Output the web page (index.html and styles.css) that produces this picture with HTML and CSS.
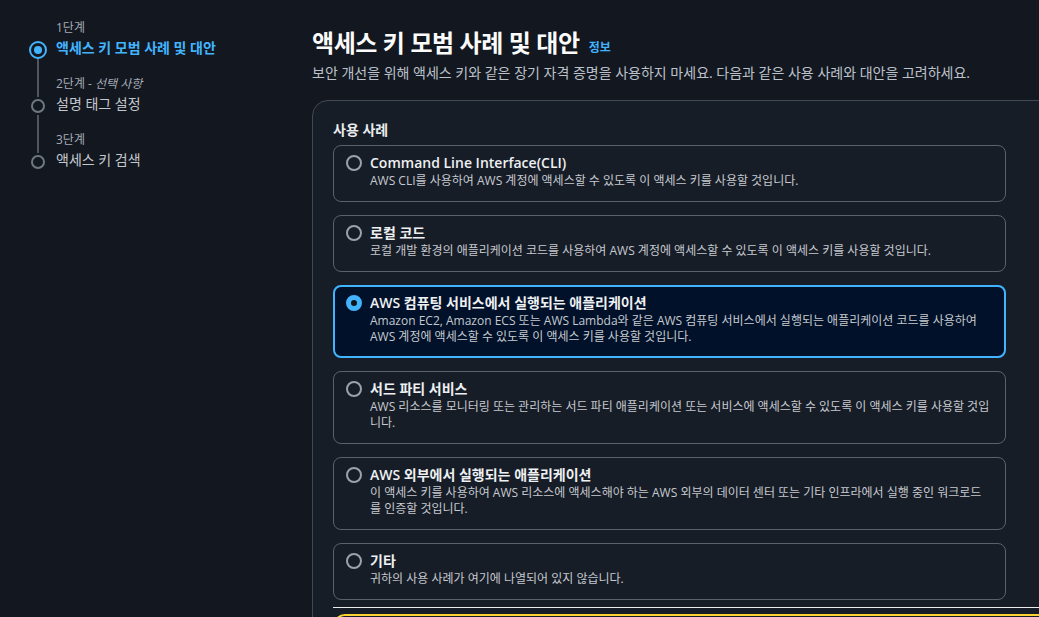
FILE: index.html
```html
<!DOCTYPE html>
<html lang="ko">
<head>
    <meta charset="UTF-8">
    <title>액세스 키 생성</title>
    <link rel="stylesheet" href="styles.css">
</head>
<body>
    <div class="layout">
        <nav class="steps">
            <ol class="step-list">
                <li class="step active">
                    <div class="rail"><span class="rail-top"></span><span class="dot"></span><span class="rail-bottom"></span></div>
                    <div class="step-text">
                        <div class="step-num">1단계</div>
                        <div class="step-name">액세스 키 모범 사례 및 대안</div>
                    </div>
                </li>
                <li class="step">
                    <div class="rail"><span class="rail-top"></span><span class="dot"></span><span class="rail-bottom"></span></div>
                    <div class="step-text">
                        <div class="step-num">2단계 - <em>선택 사항</em></div>
                        <div class="step-name">설명 태그 설정</div>
                    </div>
                </li>
                <li class="step last">
                    <div class="rail"><span class="rail-top"></span><span class="dot"></span><span class="rail-bottom"></span></div>
                    <div class="step-text">
                        <div class="step-num">3단계</div>
                        <div class="step-name">액세스 키 검색</div>
                    </div>
                </li>
            </ol>
        </nav>

        <main class="content">
            <div class="page-head">
                <h1>액세스 키 모범 사례 및 대안</h1>
                <a class="info" href="#">정보</a>
            </div>
            <p class="page-desc">보안 개선을 위해 액세스 키와 같은 장기 자격 증명을 사용하지 마세요. 다음과 같은 사용 사례와 대안을 고려하세요.</p>

            <section class="panel">
                <h2>사용 사례</h2>
                <div class="tiles">
                    <label class="tile">
                        <input type="radio" name="usecase" class="radio">
                        <span class="tile-title">Command Line Interface(CLI)</span>
                        <span class="tile-desc">AWS CLI를 사용하여 AWS 계정에 액세스할 수 있도록 이 액세스 키를 사용할 것입니다.</span>
                    </label>
                    <label class="tile">
                        <input type="radio" name="usecase" class="radio">
                        <span class="tile-title">로컬 코드</span>
                        <span class="tile-desc">로컬 개발 환경의 애플리케이션 코드를 사용하여 AWS 계정에 액세스할 수 있도록 이 액세스 키를 사용할 것입니다.</span>
                    </label>
                    <label class="tile selected">
                        <input type="radio" name="usecase" class="radio" checked>
                        <span class="tile-title">AWS 컴퓨팅 서비스에서 실행되는 애플리케이션</span>
                        <span class="tile-desc">Amazon EC2, Amazon ECS 또는 AWS Lambda와 같은 AWS 컴퓨팅 서비스에서 실행되는 애플리케이션 코드를 사용하여 AWS 계정에 액세스할 수 있도록 이 액세스 키를 사용할 것입니다.</span>
                    </label>
                    <label class="tile">
                        <input type="radio" name="usecase" class="radio">
                        <span class="tile-title">서드 파티 서비스</span>
                        <span class="tile-desc">AWS 리소스를 모니터링 또는 관리하는 서드 파티 애플리케이션 또는 서비스에 액세스할 수 있도록 이 액세스 키를 사용할 것입니다.</span>
                    </label>
                    <label class="tile">
                        <input type="radio" name="usecase" class="radio">
                        <span class="tile-title">AWS 외부에서 실행되는 애플리케이션</span>
                        <span class="tile-desc">이 액세스 키를 사용하여 AWS 리소스에 액세스해야 하는 AWS 외부의 데이터 센터 또는 기타 인프라에서 실행 중인 워크로드를 인증할 것입니다.</span>
                    </label>
                    <label class="tile">
                        <input type="radio" name="usecase" class="radio">
                        <span class="tile-title">기타</span>
                        <span class="tile-desc">귀하의 사용 사례가 여기에 나열되어 있지 않습니다.</span>
                    </label>
                </div>
                <div class="divider"></div>
                <div class="alert"></div>
            </section>
        </main>
    </div>
</body>
</html>
```

FILE: styles.css
```css
html, body {
    height: 100%;
}

body {
    margin: 0;
    overflow: hidden;
    background: #13171f;
    color: #e9ebed;
    font-family: "Open Sans", "Noto Sans CJK KR", sans-serif;
}

.layout {
    display: grid;
    grid-template-columns: 312px 1fr;
    height: 100%;
}

/* steps */
.steps {
    padding: 19px 0 0 29px;
}

.step-list {
    list-style: none;
    margin: 0;
    padding: 0;
}

.step {
    display: grid;
    grid-template-columns: 18px 1fr;
    column-gap: 9px;
}

.rail {
    display: flex;
    flex-direction: column;
    align-items: center;
}

.rail-top {
    width: 2px;
    height: 22px;
    background: #4f5663;
}

.rail-bottom {
    width: 2px;
    flex: 1;
    background: #4f5663;
}

.step.active .rail-top,
.step.last .rail-bottom {
    visibility: hidden;
}

.dot {
    box-sizing: border-box;
    width: 14px;
    height: 14px;
    margin: 2px 0;
    border: 2px solid #6f7782;
    border-radius: 50%;
}

.step.active .dot {
    width: 18px;
    height: 18px;
    margin: 0;
    border-color: #42b4ff;
    display: grid;
    place-items: center;
}

.step.active .dot::after {
    content: "";
    width: 8px;
    height: 8px;
    border-radius: 50%;
    background: #42b4ff;
}

.step-text {
    padding-bottom: 16px;
}

.step.last .step-text {
    padding-bottom: 0;
}

.step-num {
    font-size: 12px;
    line-height: 18px;
    color: #a3abb6;
}

.step-num em {
    font-style: italic;
}

.step-name {
    font-size: 14px;
    line-height: 22px;
    color: #c3c8cf;
}

.step.active .step-name {
    color: #42b4ff;
    font-weight: 700;
}

/* main */
.content {
    padding-top: 27px;
    min-width: 0;
}

.page-head {
    display: flex;
    align-items: baseline;
    gap: 9px;
}

h1 {
    margin: 0;
    font-size: 24px;
    line-height: 32px;
    font-weight: 700;
    letter-spacing: -0.4px;
    color: #fbfbfb;
}

.info {
    font-size: 12px;
    font-weight: 700;
    color: #42b4ff;
    text-decoration: none;
}

.page-desc {
    margin: 4px 0 0;
    font-size: 14px;
    line-height: 20px;
    color: #bcc2cb;
}

.panel {
    margin-top: 17px;
    width: 760px;
    min-height: 600px;
    padding: 19px 20px 0;
    border: 1px solid #434853;
    border-radius: 16px 16px 0 0;
    background: #171d27;
}

h2 {
    margin: 0 0 5px;
    font-size: 14px;
    line-height: 20px;
    font-weight: 700;
    color: #e9ebed;
}

.tiles {
    width: 673px;
    display: flex;
    flex-direction: column;
    gap: 13px;
}

.tile {
    display: grid;
    grid-template-columns: 16px 1fr;
    column-gap: 8px;
    padding: 7px 14px 12px 12px;
    border: 1px solid #5b616c;
    border-radius: 8px;
    cursor: pointer;
}

.tile.selected {
    padding: 6px 13px 11px 11px;
    border: 2px solid #42b4ff;
    background: #001129;
}

.radio {
    appearance: none;
    box-sizing: border-box;
    width: 16px;
    height: 16px;
    margin: 2px 0 0;
    border: 2px solid #9ba2ac;
    border-radius: 50%;
    background: transparent;
}

.radio:checked {
    border: 5px solid #42b4ff;
    background: #0f141a;
}

.tile-title {
    font-size: 14px;
    line-height: 20px;
    font-weight: 600;
    color: #eef0f2;
}

.tile-desc {
    grid-column: 2;
    font-size: 12px;
    line-height: 16px;
    color: #c6c9cf;
}

.divider {
    margin-top: 7px;
    height: 1px;
    background: #e9ebed;
}

.alert {
    margin-top: 6px;
    height: 60px;
    border: 2px solid #fbd332;
    border-radius: 12px;
}
```
